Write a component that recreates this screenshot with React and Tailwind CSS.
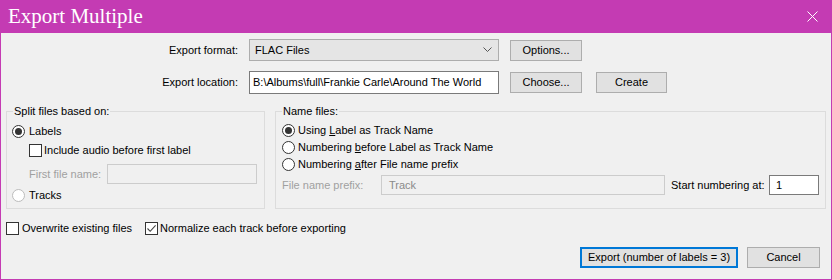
const ui = { fontFamily: '"Liberation Sans", Arial, sans-serif' };

function Radio({ checked, dim }) {
  return (
    <span
      className={`flex h-[13px] w-[13px] shrink-0 items-center justify-center rounded-full border bg-white ${
        dim ? "border-[#bcbcbc]" : "border-[#333]"
      }`}
    >
      {checked && <span className="h-[7px] w-[7px] rounded-full bg-[#333]" />}
    </span>
  );
}

function Check({ checked }) {
  return (
    <span className="flex h-[13px] w-[13px] shrink-0 items-center justify-center border border-[#333] bg-white">
      {checked && (
        <svg width="11" height="11" viewBox="0 0 11 11">
          <path d="M1.5 5.5 L4.2 8.3 L9.6 2.4" fill="none" stroke="#444" strokeWidth="1.1" />
        </svg>
      )}
    </span>
  );
}

function Button({ children, width, primary }) {
  return (
    <div
      className={`flex h-[21px] items-center justify-center bg-[#e1e1e1] ${
        primary ? "border-2 border-[#0078d7]" : "border border-[#adadad]"
      } ${width}`}
    >
      {children}
    </div>
  );
}

export default function App() {
  return (
    <div
      className="flex h-[280px] w-[832px] flex-col bg-[#c43bb3] px-[1px] pb-[1px] text-[11px] text-black"
      style={ui}
    >
      <div className="flex h-[33px] shrink-0 items-center justify-between pl-[7px] pr-[13px] text-white">
        <span className="text-[21px] leading-none" style={{ fontFamily: '"Liberation Serif", serif' }}>
          Export Multiple
        </span>
        <svg width="11" height="11" viewBox="0 0 11 11">
          <path d="M0.5 0.5 L10.5 10.5 M10.5 0.5 L0.5 10.5" stroke="#fff" strokeWidth="1" />
        </svg>
      </div>

      <div className="flex flex-1 flex-col bg-[#f0f0f0] pt-[6px]">
        {/* export format */}
        <div className="flex h-[22px] items-center">
          <div className="w-[237px] text-right">Export format:</div>
          <div className="ml-[11px] flex h-[22px] w-[250px] items-center justify-between border border-[#adadad] bg-[#e5e5e5] pl-[5px] pr-[6px]">
            <span>FLAC Files</span>
            <svg width="9" height="6" viewBox="0 0 9 6">
              <path d="M0.5 0.5 L4.5 4.5 L8.5 0.5" fill="none" stroke="#555" strokeWidth="1" />
            </svg>
          </div>
          <div className="ml-[11px]">
            <Button width="w-[72px] h-[20px]">Options...</Button>
          </div>
        </div>

        {/* export location */}
        <div className="mt-[10px] flex h-[23px] items-center">
          <div className="w-[237px] text-right">Export location:</div>
          <div className="ml-[11px] flex h-[23px] w-[250px] items-center border border-[#7a7a7a] bg-white pl-[3px]">
            B:\Albums\full\Frankie Carle\Around The World
          </div>
          <div className="ml-[11px]">
            <Button width="w-[72px]">Choose...</Button>
          </div>
          <div className="ml-[14px]">
            <Button width="w-[71px]">Create</Button>
          </div>
        </div>

        {/* groups */}
        <div className="mt-[9px] flex pl-[5px]">
          <fieldset className="h-[106px] w-[259px] border border-[#dcdcdc]">
            <legend className="ml-[6px] px-[1px] leading-[16px]">Split files based on:</legend>
            <div className="mt-[4px] flex h-[17px] items-center pl-[5px]">
              <Radio checked />
              <span className="ml-[4px]">Labels</span>
            </div>
            <div className="mt-[2px] flex h-[17px] items-center pl-[22px]">
              <Check />
              <span className="ml-[2px]">Include audio before first label</span>
            </div>
            <div className="mt-[5px] flex h-[20px] items-center pl-[22px]">
              <span className="w-[78px] text-[#a0a0a0]">First file name:</span>
              <div className="h-[20px] w-[150px] border border-[#cccccc] bg-[#f0f0f0]" />
            </div>
            <div className="mt-[3px] flex h-[17px] items-center pl-[5px]">
              <Radio dim />
              <span className="ml-[4px]">Tracks</span>
            </div>
          </fieldset>

          <fieldset className="ml-[10px] h-[106px] w-[551px] border border-[#dcdcdc]">
            <legend className="ml-[6px] px-[1px] leading-[16px]">Name files:</legend>
            <div className="mt-[3px] flex h-[17px] items-center pl-[6px]">
              <Radio checked />
              <span className="ml-[3px]">
                Using <u>L</u>abel as Track Name
              </span>
            </div>
            <div className="flex h-[17px] items-center pl-[6px]">
              <Radio />
              <span className="ml-[3px]">
                Numbering <u>b</u>efore Label as Track Name
              </span>
            </div>
            <div className="flex h-[17px] items-center pl-[6px]">
              <Radio />
              <span className="ml-[3px]">
                Numbering <u>a</u>fter File name prefix
              </span>
            </div>
            <div className="mt-[2px] flex h-[20px] items-center pl-[6px]">
              <span className="w-[99px] text-[#a0a0a0]">File name prefix:</span>
              <div className="flex h-[20px] w-[284px] items-center border border-[#cccccc] bg-[#f0f0f0] pl-[7px] text-[#8a8a8a]">
                Track
              </div>
              <span className="ml-[6px] w-[98px]">Start numbering at:</span>
              <div className="flex h-[20px] w-[50px] items-center border border-[#7a7a7a] bg-white pl-[6px]">
                1
              </div>
            </div>
          </fieldset>
        </div>

        {/* options */}
        <div className="mt-[11px] flex h-[17px] items-center pl-[5px]">
          <div className="flex w-[139px] items-center">
            <Check />
            <span className="ml-[3px]">Overwrite existing files</span>
          </div>
          <Check checked />
          <span className="ml-[2px]">Normalize each track before exporting</span>
        </div>

        {/* actions */}
        <div className="mt-[10px] flex justify-end pr-[11px]">
          <Button width="w-[158px]" primary>
            Export (number of labels = 3)
          </Button>
          <div className="ml-[9px]">
            <Button width="w-[73px]">Cancel</Button>
          </div>
        </div>
      </div>
    </div>
  );
}
